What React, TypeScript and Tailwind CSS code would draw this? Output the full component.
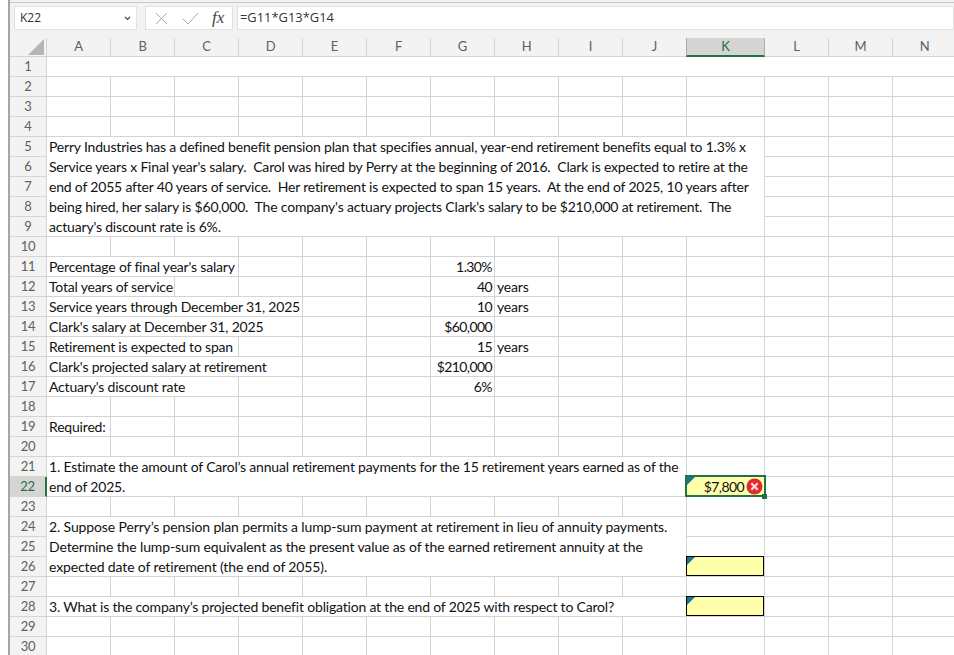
import type { ReactNode } from 'react';

type CellData = { cls?: string; text?: ReactNode; kind?: 'value' | 'selected' | 'input' };

const blank = (n: number): CellData[] => Array.from({ length: n }, () => ({}));
const val = (text: string): CellData => ({ text, kind: 'value' });

const columns = ['A', 'B', 'C', 'D', 'E', 'F', 'G', 'H', 'I', 'J', 'K', 'L', 'M', 'N'];

const Lines = ({ lines }: { lines: string[] }) => (
  <>
    {lines.map((line) => (
      <div key={line} className="h-5 whitespace-pre">
        {line}
      </div>
    ))}
  </>
);

// one entry per sheet row, merged ranges and overflowing labels use col-span
const rows: CellData[][] = [
  [{ cls: 'col-span-14' }],
  blank(14),
  blank(14),
  blank(14),
  [
    {
      cls: 'col-span-11 row-span-5',
      text: (
        <Lines
          lines={[
            'Perry Industries has a defined benefit pension plan that specifies annual, year-end retirement benefits equal to 1.3% x',
            "Service years x Final year's salary.  Carol was hired by Perry at the beginning of 2016.  Clark is expected to retire at the",
            'end of 2055 after 40 years of service.  Her retirement is expected to span 15 years.  At the end of 2025, 10 years after',
            "being hired, her salary is $60,000.  The company's actuary projects Clark's salary to be $210,000 at retirement.  The",
            "actuary's discount rate is 6%.",
          ]}
        />
      ),
    },
    ...blank(3),
  ],
  blank(3),
  blank(3),
  blank(3),
  blank(3),
  blank(14),
  [{ cls: 'col-span-3', text: "Percentage of final year's salary" }, ...blank(3), val('1.30%'), ...blank(7)],
  [{ cls: 'col-span-2', text: 'Total years of service' }, ...blank(4), val('40'), { text: 'years' }, ...blank(6)],
  [{ cls: 'col-span-4', text: 'Service years through December 31, 2025' }, ...blank(2), val('10'), { text: 'years' }, ...blank(6)],
  [{ cls: 'col-span-4', text: "Clark's salary at December 31, 2025" }, ...blank(2), val('$60,000'), ...blank(7)],
  [{ cls: 'col-span-3', text: 'Retirement is expected to span' }, ...blank(3), val('15'), { text: 'years' }, ...blank(6)],
  [{ cls: 'col-span-4', text: "Clark's projected salary at retirement" }, ...blank(2), val('$210,000'), ...blank(7)],
  [{ cls: 'col-span-3', text: "Actuary's discount rate" }, ...blank(3), val('6%'), ...blank(7)],
  blank(14),
  [{ text: 'Required:' }, ...blank(13)],
  blank(14),
  [
    {
      cls: 'col-span-10 row-span-2',
      text: (
        <Lines
          lines={[
            '1. Estimate the amount of Carol’s annual retirement payments for the 15 retirement years earned as of the',
            'end of 2025.',
          ]}
        />
      ),
    },
    ...blank(4),
  ],
  [{ kind: 'selected', text: '$7,800' }, ...blank(3)],
  blank(14),
  [
    {
      cls: 'col-span-10 row-span-3 tracking-[-0.13px]',
      text: (
        <Lines
          lines={[
            '2. Suppose Perry’s pension plan permits a lump-sum payment at retirement in lieu of annuity payments.',
            'Determine the lump-sum equivalent as the present value as of the earned retirement annuity at the',
            'expected date of retirement (the end of 2055).',
          ]}
        />
      ),
    },
    ...blank(4),
  ],
  blank(4),
  [{ kind: 'input' }, ...blank(3)],
  blank(14),
  [
    { cls: 'col-span-10', text: '3. What is the company’s projected benefit obligation at the end of 2025 with respect to Carol?' },
    { kind: 'input' },
    ...blank(3),
  ],
  blank(14),
  blank(14),
];

function Corner() {
  return (
    <div className="absolute left-0 top-0 h-2 w-2 bg-[#17788f] [clip-path:polygon(0_0,100%_0,0_100%)]" />
  );
}

function Cell({ cell }: { cell: CellData }) {
  const base = `relative h-full border-b border-r border-[#d4d4d4] ${cell.cls ?? ''}`;

  if (cell.kind === 'selected') {
    return (
      <div className={`${base} z-10`}>
        <div className="flex h-full items-center justify-end bg-[#ffffab] pr-[20px] leading-5 tracking-[-0.6px]">{cell.text}</div>
        <div className="absolute -bottom-[1px] -left-[2px] -right-[2px] -top-[2px] border-2 border-[#217346]" />
        <Corner />
        <svg className="absolute left-[59px] top-[1px]" width="17" height="17" viewBox="0 0 17 17">
          <circle cx="8.5" cy="8.5" r="8" fill="#e32b2f" />
          <path d="M5.3 5.3l6.4 6.4M11.7 5.3l-6.4 6.4" stroke="#fbdcdc" strokeWidth="2.2" />
        </svg>
        <div className="absolute -bottom-[3px] -right-[3px] h-[5px] w-[5px] bg-[#217346]" />
      </div>
    );
  }

  if (cell.kind === 'input') {
    return (
      <div className={base}>
        <div className="absolute -left-[1px] -top-[1px] bottom-0 right-0 border border-black bg-[#ffffab]">
          <Corner />
        </div>
      </div>
    );
  }

  if (cell.kind === 'value') {
    return <div className={`${base} pr-[2px] text-right leading-5 tracking-[-0.6px]`}>{cell.text}</div>;
  }

  return <div className={`${base} whitespace-nowrap pl-[2px] leading-5`}>{cell.text}</div>;
}

export default function App() {
  return (
    <div className="flex h-[655px] w-[954px] overflow-hidden bg-white font-['Lato',sans-serif] text-[14px] tracking-[-0.19px] text-[#111]">
      {/* window edge */}
      <div className="w-2 shrink-0 bg-white" />
      <div className="w-[2px] shrink-0 bg-[#a6a6a6]" />

      <div className="min-w-0 flex-1">
        {/* formula bar */}
        <div className="h-[38px] bg-[#f2f2f2] pt-[2px] tracking-normal">
          <div className="flex h-[36px] gap-1 border-t border-[#c8c8c8] pl-1 pt-[3px]">
            <div className="flex h-[24px] w-[123px] items-center justify-between border border-[#e1e1e1] bg-white pl-[5px] pr-[5px] font-['Open_Sans',sans-serif] text-[12px] text-[#333]">
              <span>K22</span>
              <svg width="7" height="5" viewBox="0 0 7 5" fill="none" stroke="#444" strokeWidth="1.2">
                <path d="M1 1l2.5 2.5L6 1" />
              </svg>
            </div>
            <div className="ml-1 flex h-[24px] w-[88px] items-center border border-[#e1e1e1] bg-white pl-[9px]">
              <svg width="13" height="13" viewBox="0 0 13 13" fill="none" stroke="#a8a8a8" strokeWidth="1">
                <path d="M1 1l11 11M12 1L1 12" />
              </svg>
              <svg className="ml-[14px]" width="17" height="13" viewBox="0 0 17 13" fill="none" stroke="#a8a8a8" strokeWidth="1">
                <path d="M1 7l5 5L16 1" />
              </svg>
              <span className="ml-[13px] font-['Liberation_Serif',serif] text-[17px] italic text-[#444]">fx</span>
            </div>
            <div className="flex h-[24px] flex-1 items-center border border-[#e1e1e1] bg-white pl-[2px] font-['Open_Sans',sans-serif] text-[12.9px] text-[#333]">
              =G11*G13*G14
            </div>
          </div>
        </div>

        {/* sheet */}
        <div className="grid w-[947px] grid-cols-[37px_repeat(10,64px)_78px_repeat(3,64px)] grid-rows-[19px_repeat(30,20px)]">
          <div className="relative border-b border-r border-[#d4d4d4] bg-[#f3f3f3]">
            <svg className="absolute right-[2px] top-[1px]" width="16" height="16" viewBox="0 0 16 16">
              <path d="M16 0V16H0Z" fill="#b5b5b5" />
            </svg>
          </div>
          {columns.map((col) =>
            col === 'K' ? (
              <div key={col} className="relative -ml-[1px] flex items-center justify-center border-b-2 border-l border-r border-[#217346] border-l-[#ababab] border-r-[#ababab] bg-[#d6d5d3] text-[13px] text-[#217346]">
                {col}
              </div>
            ) : (
              <div key={col} className="flex items-center justify-center border-b border-r border-[#d4d4d4] bg-[#f3f3f3] text-[13px] text-[#5f5f5f]">
                {col}
              </div>
            ),
          )}
          {rows.map((cells, i) => [
            i + 1 === 22 ? (
              <div key={`h${i}`} className="flex items-center justify-center border-b border-r-2 border-[#d4d4d4] border-r-[#217346] bg-[#d6d5d3] text-[13px] text-[#217346]">
                {i + 1}
              </div>
            ) : (
              <div key={`h${i}`} className="flex items-center justify-center border-b border-r border-[#d4d4d4] bg-[#f3f3f3] text-[13px] text-[#5f5f5f]">
                {i + 1}
              </div>
            ),
            ...cells.map((cell, j) => <Cell key={`${i}-${j}`} cell={cell} />),
          ])}
        </div>
      </div>
    </div>
  );
}
